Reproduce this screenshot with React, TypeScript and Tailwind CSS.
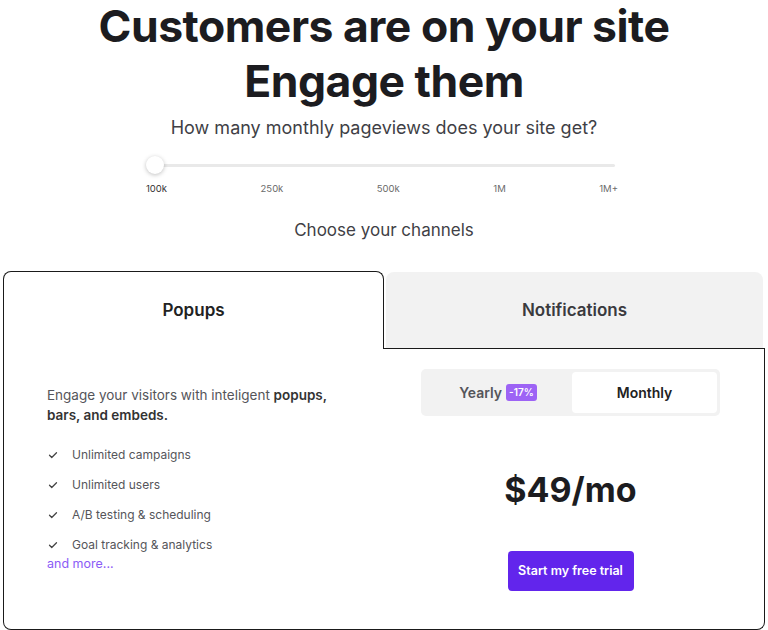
import React from "react";

const Check = () => (
  <svg width="12" height="12" viewBox="0 0 24 24" fill="none" stroke="#444" strokeWidth="2.5" strokeLinecap="round" strokeLinejoin="round">
    <path d="M5 12.5l4.5 4.5L19 7.5" />
  </svg>
);

export default function App() {
  const font = { fontFamily: "Inter, 'Noto Sans', sans-serif" };
  return (
    <div className="w-[768px] h-[630px] bg-white overflow-hidden text-[#1e1e22]" style={font}>
      <h1 className="text-center font-bold text-[44.5px] leading-[55px] tracking-[-0.5px] text-[#1c1c20] -mt-[1px]">
        Customers are on your site
        <br />
        Engage them
      </h1>
      <p className="text-center text-[18px] leading-[24px] mt-[7px] text-[#3f3f46]">
        How many monthly pageviews does your site get?
      </p>
      <div className="mx-auto w-[476px] mt-[15px] relative">
        <div className="relative h-[20px] flex items-center">
          <div className="ml-[4px] w-[465px] h-[3px] rounded-full bg-[#e9e9e9]" />
          <div className="absolute left-[0px] top-[1px] w-[18px] h-[18px] rounded-full bg-white shadow-[0_1px_4px_rgba(0,0,0,0.25)]" />
        </div>
        <div className="flex justify-between text-[9.5px] text-[#6b6b6b] mt-[7px] pr-[4px]">
          <span className="text-[#333]">100k</span>
          <span>250k</span>
          <span>500k</span>
          <span>1M</span>
          <span>1M+</span>
        </div>
      </div>
      <p className="text-center text-[17px] leading-[24px] mt-[22px] text-[#3f3f46]">Choose your channels</p>
      <div className="px-[3px] mt-[29px]">
        <div className="flex h-[78px]">
          <div className="w-[381px] border-[1.5px] border-b-0 border-[#1a1a1a] rounded-t-[8px] bg-white flex items-center justify-center">
            <span className="text-[17px] font-semibold text-[#222]">Popups</span>
          </div>
          <div className="flex-1 border-b-[1.5px] border-[#1a1a1a] pl-[2px] pr-[2px] pt-[1px]">
            <div className="h-full bg-[#f2f2f2] rounded-t-[8px] flex items-center justify-center">
              <span className="text-[17px] font-semibold text-[#3a3a3e]">Notifications</span>
            </div>
          </div>
        </div>
        <div className="h-[281px] border-[1.5px] border-t-0 border-[#1a1a1a] rounded-b-[8px] flex pl-[43px] pr-[44px] pt-[20px]">
          <div className="flex-1 pt-[16px]">
            <p className="text-[13.5px] leading-[20px] text-[#55555a]">
              Engage your visitors with inteligent <b className="font-semibold text-[#333]">popups,</b>
              <br />
              <b className="font-semibold text-[#333]">bars, and embeds.</b>
            </p>
            <ul className="mt-[21px] flex flex-col gap-[12px]">
              {["Unlimited campaigns", "Unlimited users", "A/B testing & scheduling", "Goal tracking & analytics"].map((t) => (
                <li key={t} className="flex items-center gap-[13px] text-[12px] leading-[18px] text-[#55555a]">
                  <Check />
                  <span>{t}</span>
                </li>
              ))}
            </ul>
            <p className="text-[12.5px] leading-[16px] text-[#8b5cf6] mt-[2px]">and more...</p>
          </div>
          <div className="w-[299px] flex flex-col items-center">
            <div className="w-full h-[47px] bg-[#f2f2f2] rounded-[5px] flex p-[3px]">
              <div className="flex-1 flex items-center justify-center gap-[4px]">
                <span className="text-[14px] font-semibold text-[#55555a]">Yearly</span>
                <span className="text-[10px] font-semibold text-white bg-[#9d63f5] rounded-[3px] px-[3px] py-[2px] leading-[13px]">-17%</span>
              </div>
              <div className="w-[145px] bg-white rounded-[4px] flex items-center justify-center">
                <span className="text-[14px] font-semibold text-[#222]">Monthly</span>
              </div>
            </div>
            <div className="mt-[53px] text-[34px] leading-[42px] font-bold text-[#1c1c20]">$49/mo</div>
            <button className="mt-[40px] w-[126px] h-[40px] rounded-[4px] bg-[#6225ec] text-white text-[12.5px] font-semibold">
              Start my free trial
            </button>
          </div>
        </div>
      </div>
    </div>
  );
}
